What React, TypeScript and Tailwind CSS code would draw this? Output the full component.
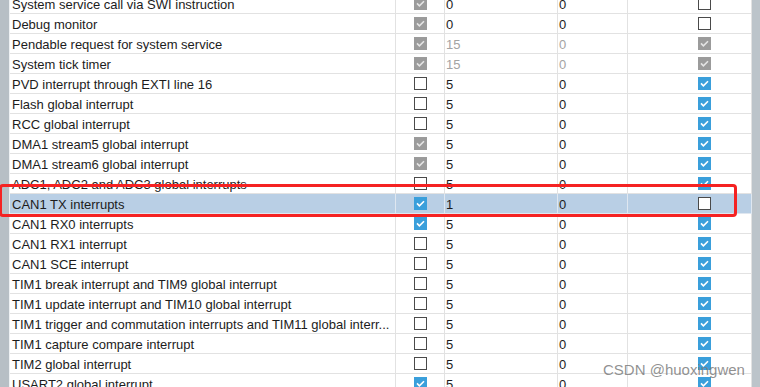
type Box = "off" | "on" | "gray";

interface Row {
  name: string;
  enabled: Box;
  prio: string;
  sub: string;
  dim?: boolean;
  handler: Box;
  selected?: boolean;
}

const rows: Row[] = [
  { name: "System service call via SWI instruction", enabled: "gray", prio: "0", sub: "0", handler: "off" },
  { name: "Debug monitor", enabled: "gray", prio: "0", sub: "0", handler: "off" },
  { name: "Pendable request for system service", enabled: "gray", prio: "15", sub: "0", dim: true, handler: "gray" },
  { name: "System tick timer", enabled: "gray", prio: "15", sub: "0", dim: true, handler: "gray" },
  { name: "PVD interrupt through EXTI line 16", enabled: "off", prio: "5", sub: "0", handler: "on" },
  { name: "Flash global interrupt", enabled: "off", prio: "5", sub: "0", handler: "on" },
  { name: "RCC global interrupt", enabled: "off", prio: "5", sub: "0", handler: "on" },
  { name: "DMA1 stream5 global interrupt", enabled: "gray", prio: "5", sub: "0", handler: "on" },
  { name: "DMA1 stream6 global interrupt", enabled: "gray", prio: "5", sub: "0", handler: "on" },
  { name: "ADC1, ADC2 and ADC3 global interrupts", enabled: "off", prio: "5", sub: "0", handler: "on" },
  { name: "CAN1 TX interrupts", enabled: "on", prio: "1", sub: "0", handler: "off", selected: true },
  { name: "CAN1 RX0 interrupts", enabled: "on", prio: "5", sub: "0", handler: "on" },
  { name: "CAN1 RX1 interrupt", enabled: "off", prio: "5", sub: "0", handler: "on" },
  { name: "CAN1 SCE interrupt", enabled: "off", prio: "5", sub: "0", handler: "on" },
  { name: "TIM1 break interrupt and TIM9 global interrupt", enabled: "off", prio: "5", sub: "0", handler: "on" },
  { name: "TIM1 update interrupt and TIM10 global interrupt", enabled: "off", prio: "5", sub: "0", handler: "on" },
  { name: "TIM1 trigger and commutation interrupts and TIM11 global interr...", enabled: "off", prio: "5", sub: "0", handler: "on" },
  { name: "TIM1 capture compare interrupt", enabled: "off", prio: "5", sub: "0", handler: "on" },
  { name: "TIM2 global interrupt", enabled: "off", prio: "5", sub: "0", handler: "on" },
  { name: "USART2 global interrupt", enabled: "on", prio: "5", sub: "0", handler: "on" },
];

function Check({ state }: { state: Box }) {
  if (state === "off") {
    return <div className="w-[13px] h-[13px] bg-white border border-[#4a4a4a]" />;
  }
  const fill = state === "on" ? "bg-[#3a9fdb]" : "bg-[#9b9b9b]";
  const stroke = state === "on" ? "#ffffff" : "#e4e4e4";
  return (
    <div className={`w-[13px] h-[13px] ${fill} flex items-center justify-center`}>
      <svg width="9" height="7" viewBox="0 0 9 7">
        <path d="M1 3.4 L3.4 5.8 L8 1.2" fill="none" stroke={stroke} strokeWidth="1.6" />
      </svg>
    </div>
  );
}

export default function App() {
  return (
    <div
      className="relative w-[760px] h-[387px] overflow-hidden bg-white flex text-[13px] text-[#1c1c1c]"
      style={{ fontFamily: '"Liberation Sans", Arial, sans-serif' }}
    >
      {/* row header strip */}
      <div className="w-[9px] h-full bg-[#b7bfc5] border-r border-[#eef1f3] box-content" />

      {/* table body, scrolled 6px */}
      <div className="w-[742px] h-full overflow-hidden">
        <div className="mt-[-6px]">
          {rows.map((r, i) => {
            const line = r.selected ? "border-[#dfe7f0]" : "border-[#e2e2e2]";
            const cell = `h-[20px] border-b border-r ${line} flex items-center`;
            const numColor = r.dim ? "text-[#a3a3a3]" : "text-[#1c1c1c]";
            return (
              <div
                key={i}
                className={`grid grid-cols-[386px_49px_113px_70px_124px] ${r.selected ? "bg-[#b9cfe5]" : "bg-white"}`}
              >
                <div className={`${cell} pl-[2px] pt-[2px] whitespace-nowrap overflow-hidden`}>{r.name}</div>
                <div className={`${cell} justify-center`}>
                  <Check state={r.enabled} />
                </div>
                <div className={`${cell} pl-[1px] pt-[2px] ${numColor}`}>{r.prio}</div>
                <div className={`${cell} pl-[1px] pt-[2px] ${numColor}`}>{r.sub}</div>
                <div className={`${cell} pl-[70px]`}>
                  <Check state={r.handler} />
                </div>
              </div>
            );
          })}
        </div>
      </div>

      {/* vertical scrollbar */}
      <div className="w-[8px] h-full bg-[#bcc4ca]" />

      {/* red annotation */}
      <div className="absolute left-[-1px] top-[184px] w-[738px] h-[33px] border-[3px] border-[#f52222] rounded-[4px]" />

      {/* watermark */}
      <div className="absolute left-[603px] top-[359px] text-[15px] text-[#7d7d7d]/85">
        CSDN @huoxingwen
      </div>
    </div>
  );
}
